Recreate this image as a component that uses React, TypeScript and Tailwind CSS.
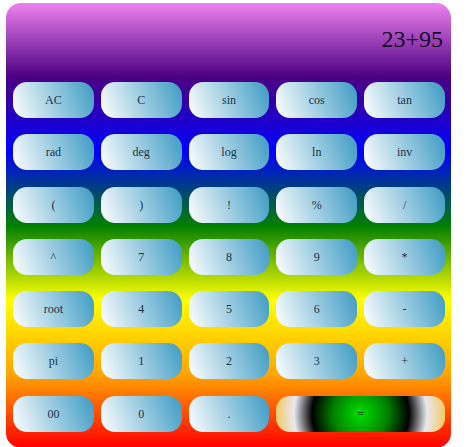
const keys = [
  'AC', 'C', 'sin', 'cos', 'tan',
  'rad', 'deg', 'log', 'ln', 'inv',
  '(', ')', '!', '%', '/',
  '^', '7', '8', '9', '*',
  'root', '4', '5', '6', '-',
  'pi', '1', '2', '3', '+',
  '00', '0', '.',
];

const App = () => (
  <div className="pl-[6px] pt-[3px] [font-family:Liberation_Serif,serif]">
    <div className="w-[445px] rounded-[15px] bg-[linear-gradient(to_bottom,violet,indigo,blue,green,yellow,orange,red)] pb-[16px] pl-[7px] pr-[6px]">
      <div className="h-[79px] pt-[18px] pr-[2px] text-right text-[24px] leading-normal text-[#150a24] [font-family:Liberation_Serif,serif]">
        23+95
      </div>
      <div className="grid grid-cols-5 gap-x-[7px] gap-y-[16.3px]">
        {keys.map((k) => (
          <button
            key={k}
            className="h-[36px] rounded-[14px] bg-[linear-gradient(70deg,#ffffff,#3d9bc4)] text-[12px] text-[#1a3448] [font-family:Liberation_Serif,serif]"
          >
            {k}
          </button>
        ))}
        <button className="col-span-2 h-[36px] rounded-[14px] bg-[radial-gradient(circle,#00e000_0%,green_32%,black_56%,#e8e8f0_77%,#f4c75a_100%)] text-[12px] text-[#0b2a10] [font-family:Liberation_Serif,serif]">
          =
        </button>
      </div>
    </div>
  </div>
);

export default App;
